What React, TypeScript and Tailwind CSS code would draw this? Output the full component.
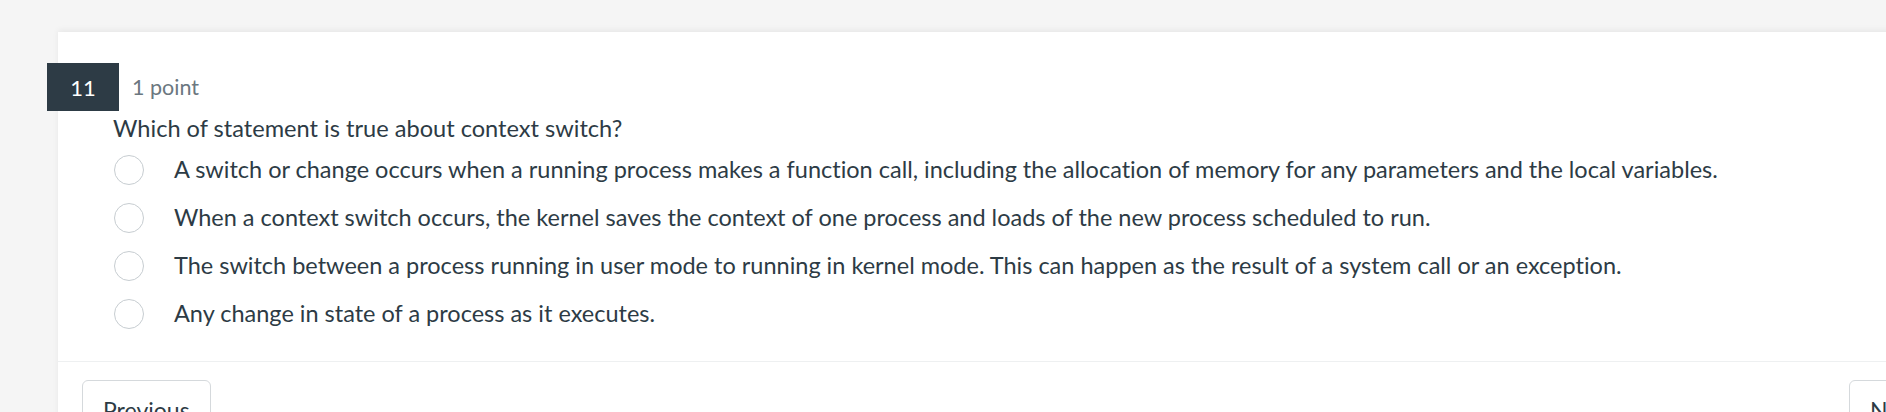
const options = [
  "A switch or change occurs when a running process makes a function call, including the allocation of memory for any parameters and the local variables.",
  "When a context switch occurs, the kernel saves the context of one process and loads of the new process scheduled to run.",
  "The switch between a process running in user mode to running in kernel mode. This can happen as the result of a system call or an exception.",
  "Any change in state of a process as it executes.",
];

export default function App() {
  return (
    <div className="h-[412px] w-[1886px] overflow-hidden bg-[#f5f5f5] pt-[32px] font-['Lato','Noto_Sans',sans-serif] text-[#2d3b45] [font-variant-ligatures:none]">
      <div className="ml-[58px] w-[1900px] bg-white shadow-[0_-2px_6px_rgba(0,0,0,0.06)]">
        {/* Question */}
        <div className="pt-[31px]">
          <div className="flex h-[48px] items-center">
            <div className="-ml-[11px] flex h-[48px] w-[72px] items-center justify-center bg-[#2d3b45] text-[22px] text-white">
              11
            </div>
            <span className="ml-[13px] text-[21.5px] text-[#6b7780]">1 point</span>
          </div>
          <div className="flex h-[35px] items-center pl-[55px] text-[23.6px]">
            Which of statement is true about context switch?
          </div>
          <div className="flex flex-col">
            {options.map((opt) => (
              <label key={opt} className="flex h-[48px] items-center pl-[56px]">
                <span className="h-[30px] w-[30px] shrink-0 rounded-full border border-[#c7cdd1] bg-white" />
                <span className="ml-[30px] text-[23.5px]">{opt}</span>
              </label>
            ))}
          </div>
        </div>

        {/* Footer */}
        <div className="mt-[23px] flex items-start justify-between border-t border-[#eef0f1] pl-[24px] pr-[18px] pt-[18px]">
          <button className="rounded-[6px] border border-[#d5d9dc] bg-white px-[20px] py-[12px] text-[23px] text-[#2d3b45]">
            Previous
          </button>
          <button className="rounded-[6px] border border-[#d5d9dc] bg-white px-[20px] py-[12px] text-[23px] text-[#2d3b45]">
            Next
          </button>
        </div>
      </div>
    </div>
  );
}
